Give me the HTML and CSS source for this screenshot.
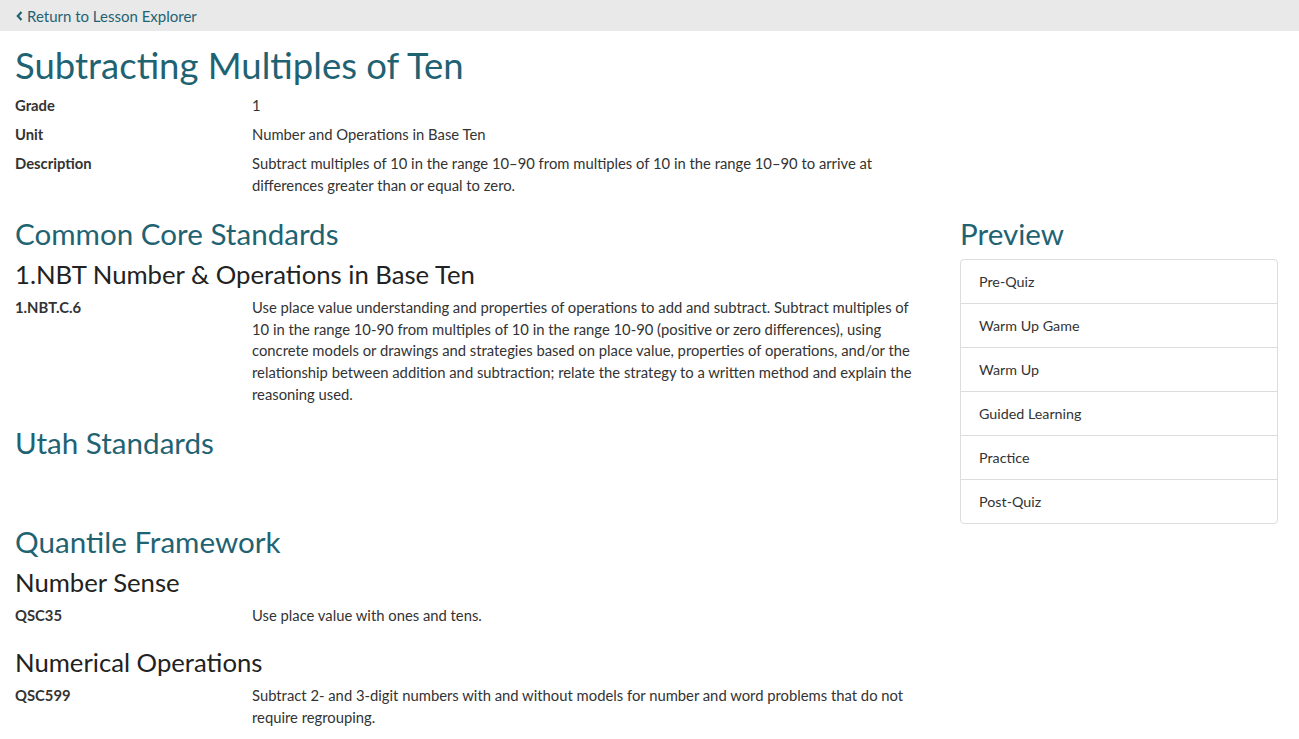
FILE: index.html
```html
<!DOCTYPE html>
<html>
<head>
    <title>Subtracting Multiples of Ten</title>
    <link rel="stylesheet" href="styles.css">
</head>
<body>
    <div class="topbar">
        <a class="back-link" href="#">
            <svg class="chev" width="7" height="10" viewBox="0 0 7 10"><polyline points="5.5,1 1.8,5 5.5,9" fill="none" stroke="currentColor" stroke-width="2.2"/></svg>
            Return to Lesson Explorer
        </a>
    </div>

    <div class="page">
        <h1 class="lesson-title">Subtracting Multiples of Ten</h1>
        <div class="details">
            <div class="row">
                <div class="label">Grade</div>
                <div class="value">1</div>
            </div>
            <div class="row">
                <div class="label">Unit</div>
                <div class="value">Number and Operations in Base Ten</div>
            </div>
            <div class="row">
                <div class="label">Description</div>
                <div class="value">Subtract multiples of 10 in the range 10–90 from multiples of 10 in the range 10–90 to arrive at differences greater than or equal to zero.</div>
            </div>
        </div>

        <div class="columns">
            <div class="main-col">
                <h2>Common Core Standards</h2>
                <div class="group">
                    <h3>1.NBT Number &amp; Operations in Base Ten</h3>
                    <div class="row">
                        <div class="label">1.NBT.C.6</div>
                        <div class="value">Use place value understanding and properties of operations to add and subtract. Subtract multiples of 10 in the range 10-90 from multiples of 10 in the range 10-90 (positive or zero differences), using concrete models or drawings and strategies based on place value, properties of operations, and/or the relationship between addition and subtraction; relate the strategy to a written method and explain the reasoning used.</div>
                    </div>
                </div>

                <h2>Utah Standards</h2>
                <div class="empty-section"></div>

                <h2>Quantile Framework</h2>
                <div class="group">
                    <h3>Number Sense</h3>
                    <div class="row">
                        <div class="label">QSC35</div>
                        <div class="value">Use place value with ones and tens.</div>
                    </div>
                </div>
                <div class="group">
                    <h3>Numerical Operations</h3>
                    <div class="row">
                        <div class="label">QSC599</div>
                        <div class="value">Subtract 2- and 3-digit numbers with and without models for number and word problems that do not require regrouping.</div>
                    </div>
                </div>
            </div>

            <div class="side-col">
                <h2>Preview</h2>
                <ul class="preview-list">
                    <li>Pre-Quiz</li>
                    <li>Warm Up Game</li>
                    <li>Warm Up</li>
                    <li>Guided Learning</li>
                    <li>Practice</li>
                    <li>Post-Quiz</li>
                </ul>
            </div>
        </div>
    </div>
</body>
</html>
```

FILE: styles.css
```css
body {
    margin: 0;
    font-family: Lato, "Open Sans", sans-serif;
    font-size: 14.8px;
    color: #333;
    background: #fff;
}
.topbar {
    height: 31px;
    background-color: #e9e9e9;
    padding-left: 16px;
    display: flex;
    align-items: center;
}
.back-link {
    color: #1f6373;
    text-decoration: none;
    font-size: 15px;
    display: flex;
    align-items: center;
    gap: 4px;
}
.chev {
    display: block;
}
.page {
    padding: 0 15px;
}
.lesson-title {
    font-size: 36.5px;
    font-weight: 400;
    line-height: 40px;
    color: #1f6373;
    margin: 14px 0 9px;
}
.details {
    width: 913px;
    display: flex;
    flex-direction: column;
    gap: 7px;
}
.row {
    display: grid;
    grid-template-columns: 237px 1fr;
    line-height: 22px;
}
.label {
    font-weight: 700;
    font-size: 14.8px;
}
.group .row {
    line-height: 21.7px;
    margin-top: 8px;
}
.columns {
    display: grid;
    grid-template-columns: 913px 318px;
    column-gap: 32px;
}
h2 {
    font-size: 29.6px;
    font-weight: 400;
    line-height: 36px;
    color: #1f6373;
    margin: 20px 0 7px;
}
.group + h2 {
    margin-top: 19px;
}
h3 {
    font-size: 25.7px;
    font-weight: 400;
    line-height: 30px;
    color: #222;
    margin: 0;
}
.group {
    margin-bottom: 18px;
}
.group + .group {
    margin-top: 21px;
}
.empty-section {
    height: 36px;
}
.preview-list {
    list-style: none;
    margin: 0;
    padding: 0;
    border: 1px solid #dddddd;
    border-radius: 4px;
}
.preview-list li {
    padding: 11px 18px;
    line-height: 21px;
    font-size: 14.3px;
    border-bottom: 1px solid #dddddd;
}
.preview-list li:last-child {
    border-bottom: none;
}
```
